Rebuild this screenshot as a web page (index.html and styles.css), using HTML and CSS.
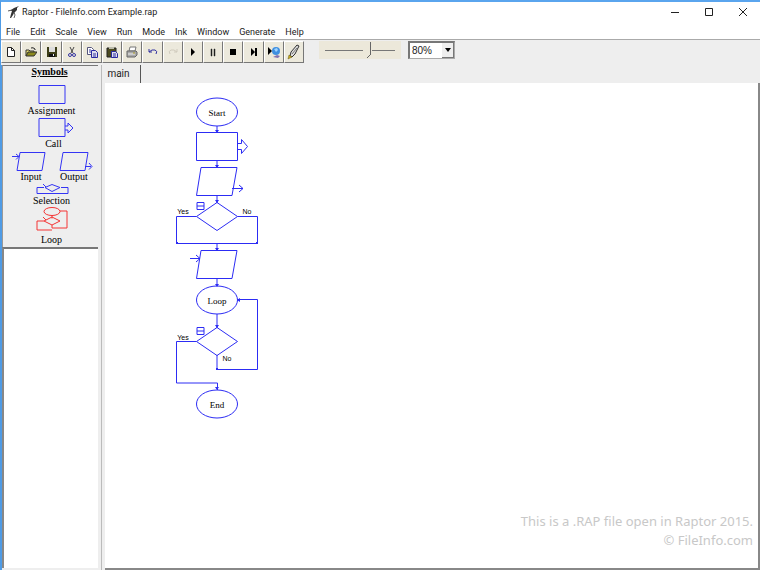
FILE: index.html
```html
<!DOCTYPE html>
<html lang="en">
<head>
<meta charset="utf-8">
<title>Raptor - FileInfo.com Example.rap</title>
<link rel="stylesheet" href="styles.css">
</head>
<body>
<header class="titlebar">
  <svg class="app-icon" width="13" height="13" viewBox="0 0 13 13"><path d="M1 5l3-1 3-2 5-2-2 2 0 2-3 3-1 2-2 3-1 0 1-4 1-3z" fill="#333"/><path d="M7 6l1 3-1 3M5 4l-4 1" stroke="#666" fill="none"/></svg>
  <h1 class="title">Raptor - FileInfo.com Example.rap</h1>
  <div class="window-buttons">
    <button aria-label="Minimize"><svg width="10" height="10" viewBox="0 0 10 10"><path d="M1 5.500h8"/></svg></button>
    <button aria-label="Maximize"><svg width="10" height="10" viewBox="0 0 10 10"><path d="M1.500 1.500h7v7h-7z"/></svg></button>
    <button aria-label="Close"><svg width="10" height="10" viewBox="0 0 10 10"><path d="M1 1l8 8M9 1l-8 8"/></svg></button>
  </div>
</header>
<nav class="menu">
  <button>File</button><button>Edit</button><button>Scale</button><button>View</button><button>Run</button><button>Mode</button><button>Ink</button><button>Window</button><button>Generate</button><button>Help</button>
</nav>
<div class="toolbar">
  <div class="tools">
    <button aria-label="New"><svg viewBox="0 0 12 12"><path d="M2.500 1.500h4l3 3v6h-7z" fill="#fff" stroke="#222"/><path d="M6.500 1.500v3h3" fill="none" stroke="#222"/></svg></button>
    <button aria-label="Open"><svg viewBox="0 0 12 12"><path d="M1 10V4h3l1 1h4v2" fill="#e8e070" stroke="#333"/><path d="M1 10l2-4h9l-3 4z" fill="#8b891c" stroke="#333"/><path d="M6 2q2-1 4 1v1" fill="none" stroke="#222"/></svg></button>
    <button aria-label="Save"><svg viewBox="0 0 12 12"><path d="M1 1h10v10H1z" fill="#3b3c16"/><path d="M3 1h6v5H3z" fill="#ddd"/><path d="M3 8h6v3H3z" fill="#111"/><path d="M7 8h1v2H7z" fill="#eee"/></svg></button>
    <button aria-label="Cut"><svg viewBox="0 0 12 12"><path d="M4 1l3 6M8 1L5 7" stroke="#444" fill="none"/><circle cx="4" cy="9" r="1.500" fill="none" stroke="#3434a0"/><circle cx="8" cy="9" r="1.500" fill="none" stroke="#3434a0"/></svg></button>
    <button aria-label="Copy"><svg viewBox="0 0 12 12"><path d="M1.500 1.500h4l2 2v5h-6z" fill="#fff" stroke="#55557c"/><path d="M5.500 4.500h4l2 2v5h-6z" fill="#dde" stroke="#2828a0"/><path d="M3 4h2M3 6h2M7 8h3M7 10h3" stroke="#3434a0"/></svg></button>
    <button aria-label="Paste"><svg viewBox="0 0 12 12"><path d="M1 2h9v9H1z" fill="#4c4b20" stroke="#222"/><path d="M3 1h5v2H3z" fill="#bba"/><path d="M5.500 5.500h4l2 2v4h-6z" fill="#dde" stroke="#2828a0"/><path d="M7 8h3M7 10h3" stroke="#2828a0"/></svg></button>
    <button aria-label="Print"><svg viewBox="0 0 12 12"><path d="M4 1h6L9 5H3z" fill="#fff" stroke="#777"/><path d="M1 5h9l1 1v3l-2 2H1z" fill="#aaa" stroke="#666"/><path d="M2 8h7" stroke="#eee"/><path d="M7 7h2" stroke="#aa9a20"/></svg></button>
    <button aria-label="Undo"><svg viewBox="0 0 12 12"><path d="M2 3v3h3M2 6q3-3 6-2 3 1 1 4" fill="none" stroke="#3030a0"/></svg></button>
    <button aria-label="Redo" disabled><svg viewBox="0 0 12 12"><path d="M10 3v3H7M10 6Q7 3 4 4 1 5 3 8" fill="none" stroke="#d0cbbd"/></svg></button>
    <button aria-label="Play"><svg viewBox="0 0 12 12"><path d="M4 2l4 4-4 4z" fill="#000"/></svg></button>
    <button aria-label="Pause"><svg viewBox="0 0 12 12"><path d="M4 3h1v7H4zM7 3h1v7H7z" fill="#111" stroke="#333" stroke-width=".5"/></svg></button>
    <button aria-label="Stop"><svg viewBox="0 0 12 12"><path d="M3 3h6v6H3z"/></svg></button>
    <button aria-label="Step"><svg viewBox="0 0 12 12"><path d="M3 2l4 4-4 4zM7 2h2v8H7z"/></svg></button>
    <button aria-label="Step into"><svg viewBox="0 0 12 12"><path d="M0 1l4 4-4 4z"/><circle cx="8" cy="5" r="4" fill="#3f8fe0"/><path d="M6 3l3-1 1 2-2 2z" fill="#9fd4ff"/><path d="M5 11l4-2 3 1-2 2z" fill="#8070b0"/></svg></button>
    <button aria-label="Pen"><svg class="pen" viewBox="0 0 14 16"><path d="M3 12l1-4 6-7 2 1-4 8-3 3z" fill="#ddd" stroke="#333"/><path d="M1 15l1-4 3 2z" fill="#c8ab20" stroke="#665a10" stroke-width=".5"/><path d="M5 10l5-6" stroke="#777"/></svg></button>
  </div>
  <input class="speed" type="range" min="0" max="100" value="62" aria-label="Execution speed">
  <div class="zoom">
    <select aria-label="Zoom"><option>80%</option></select>
    <span class="arrow"></span>
  </div>
</div>
<main class="workspace">
  <aside class="sidebar">
    <section class="symbols">
      <h2>Symbols</h2>
      <figure><svg width="94" height="20" viewBox="4 85 94 20"><path d="M38 85.500h26v18h-26z"/></svg><figcaption>Assignment</figcaption></figure>
      <figure><svg width="94" height="20" viewBox="4 118 94 20"><path d="M38 118.500h26v18h-26zM64 126h3v-3l5 5-5 5v-3h-3"/></svg><figcaption class="call">Call</figcaption></figure>
      <div class="pair">
        <figure><svg width="40" height="20" viewBox="11 151 40 20"><path d="M20 152.500h25l-3 18H17zM12 156.500h7M16 154l3 2.500-3 3"/></svg><figcaption>Input</figcaption></figure>
        <figure><svg width="40" height="20" viewBox="54 151 40 20"><path d="M63 152.500h25l-3 18H60zM85 166.500h6M89 163l3 3.500-3 3"/></svg><figcaption>Output</figcaption></figure>
      </div>
      <figure><svg width="94" height="11" viewBox="4 184 94 11"><path d="M43 187.500h-7v6h31v-6h-7M44 187.500l7-3 8 3-8 4zM42 184l3 3"/></svg><figcaption>Selection</figcaption></figure>
      <figure class="loop"><svg width="94" height="26" viewBox="4 208 94 26"><ellipse cx="51" cy="211.500" rx="8" ry="4"/><path d="M51 215.500v3M43 221l8-4 8 4-8 4zM51 225v3h15v-17h-7M43 221h-7v9h15M42 217l3 3"/></svg><figcaption>Loop</figcaption></figure>
    </section>
    <div class="watch"></div>
  </aside>
  <section class="editor">
    <div class="tabs"><button class="tab">main</button></div>
    <div class="canvas">
      <svg class="chart" width="100" height="330" viewBox="170 93 100 330">
        <g class="lines">
          <ellipse cx="217" cy="112" rx="20.500" ry="14"/>
          <path d="M217 126v6M196.500 132.500h41v28h-41zM217 160v7M237.500 143.500h4v-4l6 7-6 7v-4h-4"/>
          <path d="M201 167.500h36l-5 28h-35.500zM232 188.500h11M239 185l4 3.500-4 3.500M217 195v8"/>
          <path d="M196.500 216.500L217 202.500l20.500 14-20.500 14zM196.500 216.500h-20v27h81v-27h-20M217 243.500v7"/>
          <path d="M197 202.500h7v7h-7zM197 206h7M197 327.500h7v7h-7zM197 331h7"/>
          <path d="M201 250.500h36l-5 28h-35.500zM190 258.500h10M196 255l4 3.500-4 3.500M217 278v8"/>
          <ellipse cx="217" cy="300" rx="20.500" ry="14"/>
          <path d="M217 314v14M196.500 341.500l20.500-14 20.500 14-20.500 14zM217 355v14M217 369.500h40.500v-70h-20M196.500 341.500h-20v41.500h41v7"/>
          <ellipse cx="217" cy="404" rx="20.500" ry="14"/>
        </g>
        <path class="dots" d="M215 130h4l-2 3zM215 165h4l-2 3zM215 200h4l-2 3zM215 248h4l-2 3zM215 284h4l-2 3zM215 325h4l-2 3zM215 387h4l-2 3zM240 298v4l-3-2zM176 242h2v2h-2zM256 242h2v2h-2zM216 368h2v2h-2z"/>
        <g class="node">
          <text x="217" y="116">Start</text><text x="217" y="304">Loop</text><text x="217" y="408">End</text>
        </g>
        <g class="branch">
          <text x="183" y="214">Yes</text><text x="247" y="214">No</text><text x="183" y="340">Yes</text><text x="227" y="361">No</text>
        </g>
      </svg>
      <p class="credit">This is a .RAP file open in Raptor 2015.<br>© FileInfo.com</p>
    </div>
  </section>
</main>
</body>
</html>
```
FILE: styles.css
```css
* { box-sizing: border-box; }
body {
  margin: 0;
  min-height: 100vh;
  display: flex;
  flex-direction: column;
  background: #eee;
  border-top: 2px solid #5aa5ee;
  border-left: 1px solid #4f9be5;
  font: 9px/12px Roboto, sans-serif;
  color: #222;
}
button {
  margin: 0;
  padding: 0;
  border: 0;
  background: none;
  font: inherit;
  color: inherit;
}
.titlebar { display: flex; align-items: center; height: 20px; padding-left: 6px; background: #fff; }
.title { margin: 0 auto 0 2px; font: inherit; }
.window-buttons { display: flex; }
.window-buttons button { width: 34px; height: 20px; display: grid; place-items: center; }
.window-buttons svg { fill: none; stroke: #222; }
.menu { display: flex; gap: 10px; height: 18px; padding: 2px 5px 0; background: #fff; border-bottom: 1px solid #aaa; }
.toolbar { display: flex; align-items: flex-start; height: 25px; padding-top: 1px; }
.tools { display: flex; width: 303px; margin-right: 15px; }
.tools button {
  flex: 1;
  height: 22px;
  display: grid;
  place-items: center;
  background: #ece9dc;
  border: 1px solid #fff;
  border-right-color: #777;
  border-bottom-color: #777;
}
.tools svg { width: 12px; height: 12px; }
.tools .pen { width: 14px; height: 16px; }
.speed { appearance: none; width: 82px; height: 18px; margin: 0 7px 0 0; padding: 0 6px; background: #ece8da; }
.speed::-webkit-slider-runnable-track {
  height: 16px;
  background: linear-gradient(#777, #777) center / 100% 1px no-repeat;
}
.speed::-webkit-slider-thumb {
  appearance: none;
  width: 9px;
  height: 16px;
  background:
    linear-gradient(#666, #666) 7px 0 / 1px 12px no-repeat,
    linear-gradient(135deg, transparent 46%, #666 46% 58%, transparent 58%) 4px 12px / 4px 4px no-repeat,
    #ece8da;
}
.zoom { display: grid; width: 47px; height: 18px; }
.zoom select, .zoom .arrow { grid-area: 1 / 1; }
.zoom select {
  appearance: none;
  padding: 0 2px;
  background: #fff;
  border: 1px solid #aaa;
  border-top: 2px solid #777;
  border-left: 2px solid #777;
  border-radius: 0;
  font: 10px/14px "Liberation Sans", sans-serif;
  color: #222;
}
.zoom .arrow {
  justify-self: end;
  width: 12px;
  margin: 2px 1px 1px 0;
  display: grid;
  place-items: center;
  background: #eee;
  border-right: 1px solid #777;
  border-bottom: 1px solid #777;
  pointer-events: none;
}
.zoom .arrow::before { content: ""; border: 3px solid transparent; border-top: 4px solid #000; border-bottom: 0; }
.workspace { flex: 1; display: flex; }
.sidebar {
  width: 101px;
  display: flex;
  flex-direction: column;
  padding: 0 3px 2px 0;
  border-left: 1px solid #4f9be5;
  border-right: 1px solid #bbb;
}
.symbols {
  display: flex;
  flex-direction: column;
  align-items: center;
  gap: 1px;
  height: 182px;
  padding-left: 2px;
  border-top: 1px solid #777;
  border-left: 1px solid #999;
  font: 10px/12px "Liberation Serif", serif;
  color: #000;
}
.symbols h2 { margin: 0 0 6px; padding-right: 4px; font: inherit; font-weight: bold; text-decoration: underline; }
.symbols figure { margin: 0; display: flex; flex-direction: column; align-items: center; }
.symbols svg { overflow: visible; fill: none; stroke: #3434f4; }
.symbols .call { padding-left: 4px; }
.symbols .loop svg { stroke: #f43434; }
.pair { display: flex; gap: 3px; padding-left: 2px; }
.watch { flex: 1; background: #fff; border-top: 2px solid #777; border-left: 2px solid #888; }
.editor { flex: 1; display: flex; flex-direction: column; padding-left: 3px; }
.tabs { display: flex; height: 18px; }
.tab { width: 36px; padding: 0 8px 0 0; border-right: 1px solid #555; font: 10px/16px Roboto, sans-serif; }
.canvas {
  flex: 1;
  display: flex;
  flex-direction: column;
  justify-content: space-between;
  padding: 10px 5px 18px 65px;
  background: #fff;
  border-right: 2px solid #888;
  border-bottom: 2px solid #888;
}
.lines { fill: none; stroke: #2c2cf4; }
.dots { fill: #2c2cf4; }
.chart text { text-anchor: middle; fill: #000; }
.node { font: 9px "Liberation Serif", serif; }
.branch { font: 7px "Liberation Sans", sans-serif; }
.credit { margin: 0; text-align: right; font: 13px/19px "Noto Sans", sans-serif; color: #c8c8c8; }
```
